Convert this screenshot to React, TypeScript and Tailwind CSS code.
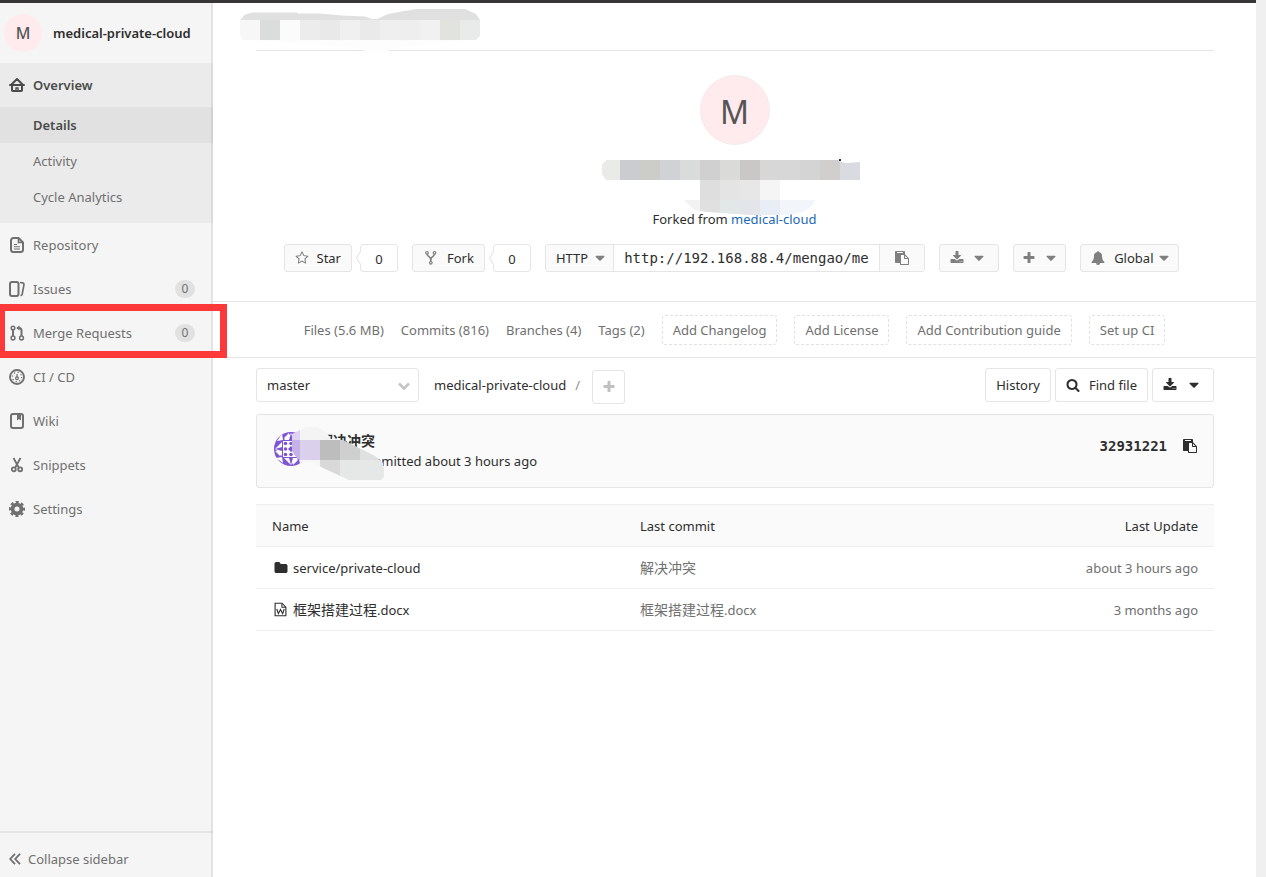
import React from "react";

type IconProps = { d: string; className?: string };

const FA = {
  caret:
    "M1408 704q0 26-19 45l-448 448q-19 19-45 19t-45-19l-448-448q-19-19-19-45t19-45 45-19h896q26 0 45 19t19 45z",
  download:
    "M1344 1344q0-26-19-45t-45-19-45 19-19 45 19 45 45 19 45-19 19-45zm256 0q0-26-19-45t-45-19-45 19-19 45 19 45 45 19 45-19 19-45zm128-224v320q0 40-28 68t-68 28h-1472q-40 0-68-28t-28-68v-320q0-40 28-68t68-28h465l135 136q58 56 136 56t136-56l136-136h464q40 0 68 28t28 68zm-325-569q17 41-14 70l-448 448q-18 19-45 19t-45-19l-448-448q-31-29-14-70 17-39 59-39h256v-448q0-26 19-45t45-19h256q26 0 45 19t19 45v448h256q42 0 59 39z",
  plus: "M1600 736v192q0 40-28 68t-68 28h-416v416q0 40-28 68t-68 28h-192q-40 0-68-28t-28-68v-416h-416q-40 0-68-28t-28-68v-192q0-40 28-68t68-28h416v-416q0-40 28-68t68-28h192q40 0 68 28t28 68v416h416q40 0 68 28t28 68z",
  paste:
    "M768 1664h896v-640h-416q-40 0-68-28t-28-68v-416h-384v1152zm256-1440v-64q0-13-9.5-22.5t-22.5-9.5h-704q-13 0-22.5 9.5t-9.5 22.5v64q0 13 9.5 22.5t22.5 9.5h704q13 0 22.5-9.5t9.5-22.5zm256 672h299l-299-299v299zm512 128v672q0 40-28 68t-68 28h-960q-40 0-68-28t-28-68v-160h-544q-40 0-68-28t-28-68v-1344q0-40 28-68t68-28h1088q40 0 68 28t28 68v328q21 13 36 28l408 408q28 28 48 76t20 88z",
  star: "M1201 1004l306-297-422-62-189-382-189 382-422 62 306 297-73 421 378-199 377 199zm527-357q0 22-26 48l-363 354 86 500q1 7 1 20 0 50-41 50-19 0-40-12l-449-236-449 236q-22 12-40 12-21 0-31.5-14.5t-10.5-35.5q0-6 2-20l86-500-364-354q-25-27-25-48 0-37 56-46l502-73 225-455q19-41 49-41t49 41l225 455 502 73q56 9 56 46z",
  search:
    "M1216 832q0-185-131.5-316.5t-316.5-131.5-316.5 131.5-131.5 316.5 131.5 316.5 316.5 131.5 316.5-131.5 131.5-316.5zm512 832q0 52-38 90t-90 38q-54 0-90-38l-343-342q-179 124-399 124-143 0-273.5-55.5t-225-150-150-225-55.5-273.5 55.5-273.5 150-225 225-150 273.5-55.5 273.5 55.5 225 150 150 225 55.5 273.5q0 220-124 399l343 343q37 37 37 90z",
  folder:
    "M1728 608v704q0 92-66 158t-158 66h-1216q-92 0-158-66t-66-158v-960q0-92 66-158t158-66h320q92 0 158 66t66 158v32h672q92 0 158 66t66 158z",
  bell: "M912 1696q0-16-16-16-59 0-101.5-42.5t-42.5-101.5q0-16-16-16t-16 16q0 73 51.5 124.5t124.5 51.5q16 0 16-16zm816-288q0 52-38 90t-90 38h-448q0 106-75 181t-181 75-181-75-75-181h-448q-52 0-90-38t-38-90q50-42 91-88t85-119.5 74.5-158.5 50-206 19.5-260q0-152 117-282.5t307-158.5q-8-19-8-39 0-40 28-68t68-28 68 28 28 68q0 20-8 39 190 28 307 158.5t117 282.5q0 139 19.5 260t50 206 74.5 158.5 85 119.5 91 88z",
};

function Fa({ d, className = "size-[14px]" }: IconProps) {
  return (
    <svg viewBox="0 0 1792 1792" fill="currentColor" aria-hidden="true" className={"shrink-0 " + className}>
      <path d={d} />
    </svg>
  );
}

function Glyph({ children }: { children: React.ReactNode }) {
  return (
    <svg viewBox="0 0 16 16" fill="none" stroke="currentColor" strokeWidth="2" aria-hidden="true" className="size-4 shrink-0">
      {children}
    </svg>
  );
}

const icons = {
  home: (
    <Glyph>
      <path d="M1 8h14M2 8l6-6 6 6" strokeLinejoin="round" strokeLinecap="round" />
      <path d="M3 8v5.2c0 .5.3.8.8.8h8.4c.5 0 .8-.3.8-.8V8" />
      <path d="M7 14v-3h2v3" strokeWidth="1.3" />
    </Glyph>
  ),
  doc: (
    <Glyph>
      <path d="M4.5 1h5L14 5.5v7A2.5 2.5 0 0 1 11.5 15h-7A2.5 2.5 0 0 1 2 12.5v-9A2.5 2.5 0 0 1 4.5 1z" />
      <path d="M9.5 1v4.5H14" strokeWidth="1.6" />
      <path d="M5 7.5h3M5 9.8h6M5 12h6" strokeWidth="1.1" />
    </Glyph>
  ),
  issues: (
    <Glyph>
      <rect x="1" y="1" width="8.5" height="14" rx="2" />
      <path d="M11 1.5l2.6.4c1 .2 1.5.9 1.3 1.9l-1.7 9.4c-.2.8-.8 1.3-1.7 1.3" strokeWidth="1.7" />
    </Glyph>
  ),
  merge: (
    <Glyph>
      <circle cx="4" cy="3" r="1.8" strokeWidth="1.5" />
      <circle cx="4" cy="13" r="1.9" strokeWidth="1.5" />
      <circle cx="12.5" cy="13" r="1.9" strokeWidth="1.5" />
      <path d="M4 5v6M12.5 11V5.5a2.5 2.5 0 0 0-2.5-2.5H9" />
      <path d="M10.5.5v5L7.2 3z" fill="currentColor" stroke="none" />
    </Glyph>
  ),
  gauge: (
    <Glyph>
      <circle cx="8" cy="8" r="7" strokeWidth="1.9" />
      <circle cx="8" cy="8" r="4.6" strokeWidth="1.2" strokeDasharray="1.2 2.413" />
      <circle cx="8" cy="9.3" r="1.4" strokeWidth="1.2" />
      <path d="M8 5v3.5" strokeWidth="1.2" />
    </Glyph>
  ),
  wiki: (
    <Glyph>
      <rect x="2" y="1" width="12" height="14" rx="2" />
      <path d="M8 1h4v6.5l-2-1.4-2 1.4z" fill="currentColor" stroke="none" />
    </Glyph>
  ),
  scissors: (
    <Glyph>
      <path d="M4.5 1l5.5 10M11.5 1L6 11" strokeWidth="1.8" />
      <circle cx="4.8" cy="12.3" r="2" strokeWidth="1.8" />
      <circle cx="11.2" cy="12.3" r="2" strokeWidth="1.8" />
    </Glyph>
  ),
  gear: (
    <Glyph>
      <circle cx="8" cy="8" r="4.4" strokeWidth="3.8" />
      <circle cx="8" cy="8" r="6.9" strokeWidth="2.4" strokeDasharray="3 2.419" strokeDashoffset="1.5" />
    </Glyph>
  ),
};

function Pill({ children }: { children: React.ReactNode }) {
  return (
    <span className="ml-auto flex h-[18px] w-5 items-center justify-center rounded-full bg-[#e1e1e1] text-xs">
      {children}
    </span>
  );
}

const nav = [
  { label: "Repository", icon: icons.doc },
  { label: "Issues", icon: icons.issues, count: "0" },
  { label: "Merge Requests", icon: icons.merge, count: "0", marked: true },
  { label: "CI / CD", icon: icons.gauge },
  { label: "Wiki", icon: icons.wiki },
  { label: "Snippets", icon: icons.scissors },
  { label: "Settings", icon: icons.gear },
];

function Sidebar() {
  return (
    <aside className="relative flex w-[213px] shrink-0 flex-col bg-[#f5f5f5] text-[#707070]">
      <a href="#" className="flex h-[60px] items-center gap-[11px] pl-1 font-semibold text-[#2e2e2e]">
        <span className="flex size-[38px] items-center justify-center rounded-full bg-[#ffebee] text-base font-medium text-[#555]">
          M
        </span>
        medical-private-cloud
      </a>
      <nav>
        <div className="bg-[#ebebeb] pb-2">
          <a href="#" className="flex h-11 items-center gap-2 pl-[9px] font-semibold text-[#4b4b4b]">
            {icons.home}
            Overview
          </a>
          <a href="#" className="flex h-9 items-center bg-[#e1e1e1] pl-[33px] font-semibold text-[#4b4b4b]">
            Details
          </a>
          <a href="#" className="flex h-9 items-center pl-[33px]">
            Activity
          </a>
          <a href="#" className="flex h-9 items-center pl-[33px]">
            Cycle Analytics
          </a>
        </div>
        {nav.map((n) => (
          <a key={n.label} href="#" className="relative flex h-11 items-center gap-2 pr-[18px] pl-[9px]">
            {n.icon}
            {n.label}
            {n.count && <Pill>{n.count}</Pill>}
            {n.marked && (
              <span className="absolute -top-[7px] -right-[14px] -bottom-[3px] -left-[2px] z-20 border-[7px] border-[#fe3939]" />
            )}
          </a>
        ))}
      </nav>
      <button type="button" className="mt-auto flex h-[46px] items-center gap-[7px] border-t-2 border-[#e5e5e5] pt-2 pl-[9px]">
        <svg viewBox="0 0 12 12" fill="none" stroke="currentColor" strokeWidth="1.8" aria-hidden="true" className="size-3">
          <path d="M6 .8L1.2 6 6 11.2M11 .8L6.2 6l4.8 5.2" />
        </svg>
        Collapse sidebar
      </button>
      <span className="absolute inset-y-0 right-0 w-[2px] bg-black/7" />
    </aside>
  );
}

const btn = "flex items-center rounded-[3px] border border-[#e5e5e5]";

function Count({ children }: { children: React.ReactNode }) {
  return (
    <span className="relative ml-2 flex h-7 w-[38px] items-center justify-center rounded-[3px] border border-[#e5e5e5] bg-white pt-[2px]">
      {children}
      <svg viewBox="0 0 5 14" aria-hidden="true" className="absolute top-[6px] -left-[5px] h-[14px] w-[5px]">
        <path d="M5 0L.6 7 5 14z" fill="#fff" />
        <path d="M4.5.5L.6 7l3.9 6.5" fill="none" stroke="#e0e0e0" />
      </svg>
    </span>
  );
}

type Block = [number, number, number, number, string];

function Blocks({ items }: { items: Block[] }) {
  return (
    <>
      {items.map(([x, y, w, h, c], i) => (
        <rect key={i} x={x} y={y} width={w} height={h} fill={c} />
      ))}
    </>
  );
}

const crumbBlocks: Block[] = [
  [0, 11, 20, 20, "#f7f7f7"],
  [20, 11, 20, 20, "#dbdddc"],
  [40, 11, 20, 20, "#fbfbfb"],
  [60, 11, 20, 20, "#ececec"],
  [80, 11, 20, 20, "#e9e9e9"],
  [100, 11, 20, 20, "#f0f0f0"],
  [120, 11, 20, 20, "#eaeaea"],
  [140, 11, 20, 20, "#efefef"],
  [160, 11, 20, 20, "#eeeeee"],
  [180, 11, 20, 20, "#f1f1f1"],
  [200, 11, 20, 20, "#e2e2df"],
  [220, 11, 20, 20, "#e8ebe9"],
];

function CrumbMask() {
  return (
    <svg viewBox="0 0 240 44" aria-hidden="true" className="absolute top-[6px] -left-4 h-[44px] w-[240px]">
      <path
        d="M0 11l5-5.500 7-2h45l1 1h22l22 2 23 1 7 2.500h5l11-5 28-5h49l11 5 4 6z"
        fill="#e0e0e0"
      />
      <clipPath id="crumb">
        <path d="M0 11h240v16l-4 4H3l-3-4z" />
      </clipPath>
      <g clipPath="url(#crumb)">
        <Blocks items={crumbBlocks} />
      </g>
      <path d="M10 31h215l-70 8-10 4h-17l-10-4z" fill="#fdfdfd" />
    </svg>
  );
}

const titleBlocks: Block[] = [
  [0, 0, 18, 20, "#eaeae9"],
  [18, 0, 20, 20, "#cbccd0"],
  [38, 0, 20, 20, "#cccdc8"],
  [58, 0, 20, 20, "#d1d2d5"],
  [78, 0, 20, 20, "#d9dcdb"],
  [98, 0, 20, 20, "#d0d0d0"],
  [118, 0, 20, 20, "#dadbd9"],
  [138, 0, 20, 20, "#c9c8c7"],
  [158, 0, 40, 20, "#d7d7d7"],
  [198, 0, 20, 20, "#d4d4d4"],
  [218, 0, 20, 20, "#d0cfce"],
  [238, 0, 20, 20, "#dadbe0"],
  [98, 20, 20, 20, "#dedede"],
  [118, 20, 20, 20, "#e4e4e4"],
  [138, 20, 20, 20, "#e7e7e7"],
  [158, 20, 20, 20, "#f5f5f5"],
];

function TitleMask() {
  return (
    <svg viewBox="0 0 258 56" aria-hidden="true" className="absolute top-0 left-1/2 -ml-[133px] h-[56px] w-[258px] overflow-visible">
      <clipPath id="title">
        <path d="M4 0h232l4 2 4 1 14-1v18h-80v20H98V20H4L0 14V5z" />
      </clipPath>
      <g clipPath="url(#title)">
        <Blocks items={titleBlocks} />
      </g>
      <clipPath id="swoop">
        <path d="M82 40h131l-2 5-10 7-14 3h-40l-41-3-14-2z" />
      </clipPath>
      <g clipPath="url(#swoop)">
        <Blocks
          items={[
            [78, 40, 20, 16, "#f2f2f3"],
            [98, 40, 20, 16, "#e0e0e0"],
            [118, 40, 20, 16, "#e2e7e8"],
            [138, 40, 20, 16, "#e3e5ea"],
            [158, 40, 20, 16, "#e9edf5"],
            [178, 40, 40, 16, "#f2f5f9"],
          ]}
        />
      </g>
      <rect x="237" y="-1" width="2" height="2" fill="#2e2e4e" />
    </svg>
  );
}

function Identicon() {
  return (
    <svg viewBox="0 0 36 36" aria-hidden="true" className="size-9 rounded-full">
      <circle cx="18" cy="18" r="17" fill="#7f55d4" />
      {[0, 90, 180, 270].map((a) => (
        <g key={a} transform={"rotate(" + a + " 18 18)"} fill="#fff">
          <path d="M2 18l7-7v5z" />
          <path d="M2 18l7 7v-5z" />
          <path d="M9 3l1 6-6 1z" />
          <path d="M11 7l5-5v3l-3 4z" />
        </g>
      ))}
      <rect x="10" y="10" width="16" height="16" fill="#fff" />
      <g fill="#7f55d4">
        <circle cx="12.500" cy="12.500" r="1.800" />
        <circle cx="23.500" cy="12.500" r="1.800" />
        <circle cx="12.500" cy="23.500" r="1.800" />
        <circle cx="23.500" cy="23.500" r="1.800" />
        <circle cx="18" cy="12.500" r="1.800" />
        <circle cx="18" cy="23.500" r="1.800" />
        <circle cx="12.500" cy="18" r="1.800" />
        <circle cx="23.500" cy="18" r="1.800" />
        <path d="M18 15l3 3-3 3-3-3z" />
      </g>
    </svg>
  );
}

function CommitMask() {
  return (
    <svg viewBox="0 0 96 60" aria-hidden="true" className="absolute top-[12px] left-[35px] h-[60px] w-[96px]">
      <clipPath id="commit">
        <path d="M0 7L8 3 15 0h10l9 5 5 7 12 1 32 16 8 7 1 8v6l-3 3H57L31 41 22 36l-12-1L4 30 0 24z" />
      </clipPath>
      <g clipPath="url(#commit)">
        <Blocks
          items={[
            [0, 0, 8, 13, "#ddd2f0"],
            [8, 0, 40, 13, "#f4f4f5"],
            [0, 13, 8, 20, "#c5b3e8"],
            [8, 13, 20, 20, "#dad0ec"],
            [28, 13, 20, 20, "#bdbdbd"],
            [48, 13, 20, 20, "#cfcfcf"],
            [68, 13, 28, 20, "#dfe0e0"],
            [8, 33, 20, 20, "#f7f7f8"],
            [28, 33, 20, 20, "#d9d9d9"],
            [48, 33, 48, 20, "#e6e7e7"],
          ]}
        />
      </g>
    </svg>
  );
}

function WordFile() {
  return (
    <svg viewBox="0 0 14 16" fill="none" stroke="currentColor" aria-hidden="true" className="h-[15px] w-[13px] shrink-0">
      <path d="M1.2 1.2h7.300l4.300 4.300v9.300H1.200z" strokeWidth="1.2" />
      <path d="M8.5 1.2v4.300h4.300" strokeWidth="1.1" />
      <path d="M3 7.500l1.700 5L7 8l2.300 4.500 1.700-5" strokeWidth="1.2" />
    </svg>
  );
}

const stats = ["Files (5.6 MB)", "Commits (816)", "Branches (4)", "Tags (2)"];
const actions = ["Add Changelog", "Add License", "Add Contribution guide", "Set up CI"];

function DocName() {
  return (
    <span>
      <span className="text-sm">框架搭建过程</span>.docx
    </span>
  );
}

export default function App() {
  return (
    <div className="flex min-h-screen bg-white font-['Noto_Sans','Noto_Sans_CJK_SC',sans-serif] text-[13px] leading-5 text-[#2e2e2e]">
      <div className="flex min-w-0 grow flex-col border-t-[3px] border-[#373536]">
        <div className="flex grow">
          <Sidebar />
          <main className="min-w-0 grow">
            <header className="relative mr-[42px] ml-[43px] h-12 border-b border-[#e5e5e5]">
              <CrumbMask />
            </header>

            <section className="flex flex-col items-center border-b border-[#e5e5e5] pt-6 pb-[29px]">
              <div className="flex size-[70px] items-center justify-center rounded-full border border-[#f2ecec] bg-[#ffebee] pt-1 text-[32px] text-[#555]">
                M
              </div>
              <div className="relative mt-[15px] flex h-[69px] w-full items-end justify-center">
                <p>
                  Forked from{" "}
                  <a href="#" className="text-[#1b69b6]">
                    medical-cloud
                  </a>
                </p>
                <TitleMask />
              </div>
              <div className="mt-[15px] flex items-center gap-[14px] pr-[6px]">
                <div className="flex">
                  <button type="button" className={btn + " h-7 gap-2 bg-[#fafafa] px-[10px]"}>
                    <Fa d={FA.star} className="size-[14px] text-[#7f7f7f]" />
                    Star
                  </button>
                  <Count>0</Count>
                </div>
                <div className="flex">
                  <button type="button" className={btn + " h-7 gap-2 bg-[#fafafa] px-[10px]"}>
                    <svg viewBox="0 0 16 16" fill="none" stroke="#7f7f7f" strokeWidth="1.2" aria-hidden="true" className="size-4">
                      <circle cx="4" cy="2.800" r="1.300" />
                      <circle cx="11.500" cy="2.800" r="1.300" />
                      <circle cx="7.800" cy="12.800" r="1.300" />
                      <path d="M4.200 4.200c.2 2.600 3.600 2.400 3.600 5.200 0-2.800 3.400-2.600 3.600-5.200M7.800 8v3.500" strokeWidth="1.700" />
                    </svg>
                    Fork
                  </button>
                  <Count>0</Count>
                </div>
                <div className="flex h-7 overflow-hidden rounded-[3px] border border-[#e5e5e5]">
                  <button type="button" className="flex items-center gap-1 bg-[#fafafa] pr-[5px] pl-[10px]">
                    HTTP
                    <Fa d={FA.caret} className="size-4 text-[#7f7f7f]" />
                  </button>
                  <input
                    aria-label="Project clone URL"
                    readOnly
                    defaultValue="http://192.168.88.4/mengao/me"
                    className="w-[267px] border-x border-[#e5e5e5] px-[10px] font-['DejaVu_Sans_Mono',monospace] text-sm outline-none"
                  />
                  <button type="button" aria-label="Copy URL" className="flex w-11 items-center justify-center bg-[#fafafa] text-[#7f7f7f]">
                    <Fa d={FA.paste} />
                  </button>
                </div>
                <button type="button" aria-label="Download" className={btn + " h-7 w-[60px] gap-[7px] bg-[#fafafa] pl-[10px] text-[#7f7f7f]"}>
                  <Fa d={FA.download} />
                  <Fa d={FA.caret} className="size-4" />
                </button>
                <button type="button" aria-label="Create new" className={btn + " h-7 w-[53px] gap-[7px] bg-[#fafafa] pl-[8px] text-[#7f7f7f]"}>
                  <Fa d={FA.plus} />
                  <Fa d={FA.caret} className="size-4" />
                </button>
                <button type="button" className={btn + " h-7 bg-[#fafafa] pr-[6px] pl-[10px]"}>
                  <Fa d={FA.bell} className="mr-[9px] size-[14px] text-[#7f7f7f]" />
                  Global
                  <Fa d={FA.caret} className="ml-[3px] size-4 text-[#7f7f7f]" />
                </button>
              </div>
            </section>

            <section className="flex h-14 items-center justify-center gap-[17px] border-b border-[#e5e5e5] text-[#707070]">
              {stats.map((s) => (
                <a key={s} href="#">
                  {s}
                </a>
              ))}
              {actions.map((s) => (
                <a key={s} href="#" className="rounded-[3px] border border-dashed border-[#e1e1e1] px-[10px] py-1">
                  {s}
                </a>
              ))}
            </section>

            <div className="mr-[42px] ml-[43px] pt-[10px]">
              <div className="flex h-9 items-start leading-[34px]">
                <button type="button" className={btn + " h-[34px] w-[163px] justify-between pr-2 pl-[10px]"}>
                  master
                  <svg viewBox="0 0 12 12" fill="none" stroke="#c4c4c4" strokeWidth="2.600" aria-hidden="true" className="mt-[2px] size-3">
                    <path d="M1 3.500l5 5 5-5" />
                  </svg>
                </button>
                <a href="#" className="ml-[15px]">
                  medical-private-cloud
                </a>
                <span className="ml-[9px] text-[#8f8f8f]">/</span>
                <button type="button" aria-label="Add to tree" className={btn + " mt-[2px] ml-3 h-[34px] w-[33px] justify-center text-[#c0c0c0]"}>
                  <Fa d={FA.plus} />
                </button>
                <div className="ml-auto flex gap-1">
                  <button type="button" className={btn + " h-[34px] px-[10px]"}>
                    History
                  </button>
                  <button type="button" className={btn + " h-[34px] gap-[9px] px-[10px]"}>
                    <Fa d={FA.search} />
                    Find file
                  </button>
                  <button type="button" aria-label="Download source" className={btn + " h-[34px] w-[62px] gap-[9px] pl-[10px]"}>
                    <Fa d={FA.download} />
                    <Fa d={FA.caret} className="size-4" />
                  </button>
                </div>
              </div>

              <div className="relative mt-[10px] flex h-[74px] rounded-[3px] border border-[#e5e5e5] bg-[#fafafa] px-4">
                <div className="mt-4">
                  <Identicon />
                </div>
                <div className="ml-[10px] pt-4">
                  <a href="#" className="block text-sm leading-5 font-bold">
                    解决冲突
                  </a>
                  <p className="pl-9">committed about 3 hours ago</p>
                </div>
                <div className="mb-[10px] ml-auto flex items-center gap-4">
                  <a href="#" className="font-['DejaVu_Sans_Mono',monospace] text-sm font-bold">
                    32931221
                  </a>
                  <button type="button" aria-label="Copy commit SHA">
                    <Fa d={FA.paste} />
                  </button>
                </div>
                <CommitMask />
              </div>

              <table className="mt-4 w-full border-t border-[#eee]">
                <thead>
                  <tr className="h-[42px] border-b border-[#eee] bg-[#fafafa] text-left">
                    <th className="w-[368px] px-4 font-normal">Name</th>
                    <th className="px-4 font-normal">Last commit</th>
                    <th className="px-4 text-right font-normal">Last Update</th>
                  </tr>
                </thead>
                <tbody>
                  <tr className="h-[42px] border-b border-[#eee]">
                    <td className="px-4">
                      <a href="#" className="flex items-center gap-[5px] pl-[2px]">
                        <Fa d={FA.folder} />
                        service/private-cloud
                      </a>
                    </td>
                    <td className="px-4 text-sm text-[#707070]">解决冲突</td>
                    <td className="px-4 text-right text-[#707070]">about 3 hours ago</td>
                  </tr>
                  <tr className="h-[42px] border-b border-[#eee]">
                    <td className="px-4">
                      <a href="#" className="flex items-center gap-[6px] pl-[2px]">
                        <WordFile />
                        <DocName />
                      </a>
                    </td>
                    <td className="px-4 text-[#707070]">
                      <DocName />
                    </td>
                    <td className="px-4 text-right text-[#707070]">3 months ago</td>
                  </tr>
                </tbody>
              </table>
            </div>
          </main>
        </div>
      </div>
      <div className="w-[10px] shrink-0 bg-[#f0f0f0]" />
    </div>
  );
}
